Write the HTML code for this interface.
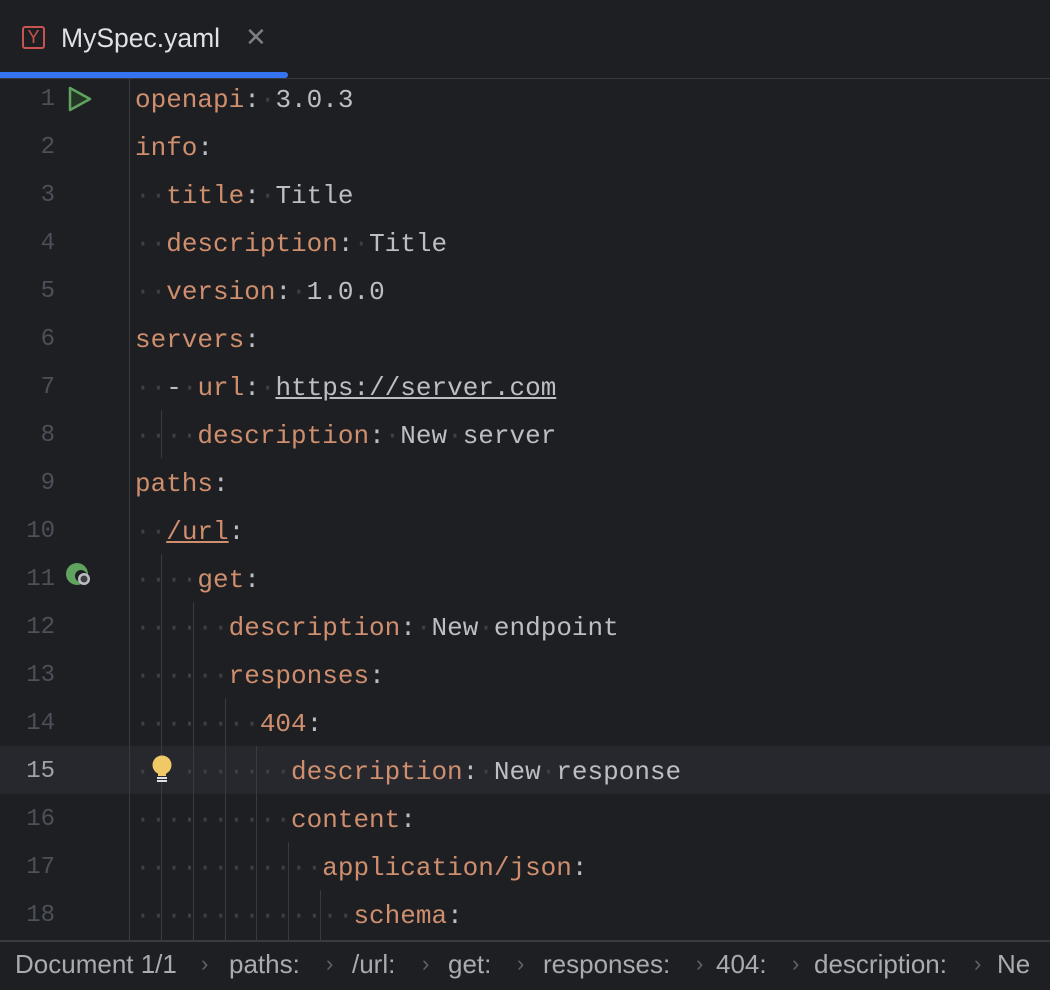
<!DOCTYPE html>
<html><head><meta charset="utf-8"><style>
html,body{margin:0;padding:0;background:#1e1f22;width:1050px;height:990px;overflow:hidden;position:relative;font-family:"Liberation Sans",sans-serif}
#w{position:absolute;left:0;top:0;width:1050px;height:990px;overflow:hidden}
.tab{position:absolute;left:0;top:0;width:1050px;height:79px;border-bottom:1px solid #393b40;box-sizing:border-box}
.tabu{position:absolute;left:0;top:72px;width:288px;height:6px;background:#3574f0;border-radius:0 3px 3px 0}
.ticon{position:absolute;left:22px;top:26px;width:23px;height:23px;border:2px solid #c75450;border-radius:3px;box-sizing:border-box;color:#c75450;font-size:18px;line-height:19px;text-align:center}
.tname{position:absolute;left:61px;top:23px;font-size:26.5px;color:#dfe1e5}
.tx{position:absolute;left:245px;top:22px;font-size:26px;color:#7a7e85}
.gut{position:absolute;left:129px;top:79px;width:1px;height:861px;background:#393b40}
.ln{position:absolute;left:0;width:55px;text-align:right;font-family:"Liberation Mono",monospace;font-size:24px;color:#4b5059;line-height:48px}
.row{position:absolute;left:135px;font-family:"Liberation Mono",monospace;font-size:26px;line-height:48px;color:#bcbec4;white-space:pre}
.k{color:#cf8e6d}.d{color:#3d4047}.u{text-decoration:underline}
.hl{position:absolute;left:0;top:746px;width:1050px;height:48px;background:#26282e}
.g{position:absolute;width:1px;background:#393b40}
.st{position:absolute;left:0;top:940px;width:1050px;height:50px;border-top:2px solid #393b40;box-sizing:border-box;background:#1e1f22}
.s{position:absolute;top:949px;font-size:26px;color:#a8abb0;white-space:nowrap}
.a{position:absolute;top:951px;font-size:22px;color:#5f636a}
</style></head><body><div id="w">
<div class="tab"></div><div class="tabu"></div>
<div class="ticon">Y</div><div class="tname">MySpec.yaml</div><div class="tx">✕</div>
<div class="hl"></div>
<div class="gut"></div>
<div class="g" style="left:161px;top:410px;height:48px"></div>
<div class="g" style="left:161px;top:554px;height:386px"></div>
<div class="g" style="left:193px;top:602px;height:338px"></div>
<div class="g" style="left:225px;top:698px;height:242px"></div>
<div class="g" style="left:256px;top:746px;height:194px"></div>
<div class="g" style="left:288px;top:842px;height:98px"></div>
<div class="g" style="left:320px;top:890px;height:50px"></div>

<div class="ln" style="top:76px">1</div>
<div class="ln" style="top:124px">2</div>
<div class="ln" style="top:172px">3</div>
<div class="ln" style="top:220px">4</div>
<div class="ln" style="top:268px">5</div>
<div class="ln" style="top:316px">6</div>
<div class="ln" style="top:364px">7</div>
<div class="ln" style="top:412px">8</div>
<div class="ln" style="top:460px">9</div>
<div class="ln" style="top:508px">10</div>
<div class="ln" style="top:556px">11</div>
<div class="ln" style="top:604px">12</div>
<div class="ln" style="top:652px">13</div>
<div class="ln" style="top:700px">14</div>
<div class="ln" style="top:748px;color:#a1a3ab">15</div>
<div class="ln" style="top:796px">16</div>
<div class="ln" style="top:844px">17</div>
<div class="ln" style="top:892px">18</div>

<svg style="position:absolute;left:66px;top:86px" width="28" height="28"><path d="M4 2 L24 13 L4 24 Z" fill="#253627" stroke="#5fa35f" stroke-width="2.5" stroke-linejoin="round"/></svg>
<svg style="position:absolute;left:66px;top:562px" width="28" height="28"><circle cx="11" cy="12" r="11" fill="#5fa35f"/><circle cx="15" cy="14" r="6" fill="#1e1f22"/><circle cx="18" cy="17" r="6" fill="#bcbec4"/><circle cx="18" cy="17" r="3.5" fill="#3c3f44"/></svg>
<svg style="position:absolute;left:150px;top:755px" width="24" height="32"><circle cx="12" cy="10" r="9.5" fill="#f0c966"/><rect x="8" y="18" width="8" height="3" fill="#f0c966"/><rect x="7" y="22" width="10" height="2" fill="#dfe1e5"/><rect x="7" y="25" width="10" height="2" fill="#dfe1e5"/></svg>

<div class="row" style="top:76px"><span class="k">openapi</span>:<span class="d">·</span>3.0.3</div>
<div class="row" style="top:124px"><span class="k">info</span>:</div>
<div class="row" style="top:172px"><span class="d">··</span><span class="k">title</span>:<span class="d">·</span>Title</div>
<div class="row" style="top:220px"><span class="d">··</span><span class="k">description</span>:<span class="d">·</span>Title</div>
<div class="row" style="top:268px"><span class="d">··</span><span class="k">version</span>:<span class="d">·</span>1.0.0</div>
<div class="row" style="top:316px"><span class="k">servers</span>:</div>
<div class="row" style="top:364px"><span class="d">··</span>-<span class="d">·</span><span class="k">url</span>:<span class="d">·</span><span class="u">https://server.com</span></div>
<div class="row" style="top:412px"><span class="d">····</span><span class="k">description</span>:<span class="d">·</span>New<span class="d">·</span>server</div>
<div class="row" style="top:460px"><span class="k">paths</span>:</div>
<div class="row" style="top:508px"><span class="d">··</span><span class="k u">/url</span>:</div>
<div class="row" style="top:556px"><span class="d">····</span><span class="k">get</span>:</div>
<div class="row" style="top:604px"><span class="d">······</span><span class="k">description</span>:<span class="d">·</span>New<span class="d">·</span>endpoint</div>
<div class="row" style="top:652px"><span class="d">······</span><span class="k">responses</span>:</div>
<div class="row" style="top:700px"><span class="d">········</span><span class="k">404</span>:</div>
<div class="row" style="top:748px"><span class="d">·  ·······</span><span class="k">description</span>:<span class="d">·</span>New<span class="d">·</span>response</div>
<div class="row" style="top:796px"><span class="d">··········</span><span class="k">content</span>:</div>
<div class="row" style="top:844px"><span class="d">············</span><span class="k">application/json</span>:</div>
<div class="row" style="top:892px"><span class="d">··············</span><span class="k">schema</span>:</div>

<div class="st"></div>
<div class="s" style="left:15px">Document 1/1</div>
<div class="a" style="left:201px">›</div>
<div class="s" style="left:229px">paths:</div>
<div class="a" style="left:326px">›</div>
<div class="s" style="left:352px">/url:</div>
<div class="a" style="left:422px">›</div>
<div class="s" style="left:448px">get:</div>
<div class="a" style="left:517px">›</div>
<div class="s" style="left:543px">responses:</div>
<div class="a" style="left:696px">›</div>
<div class="s" style="left:716px">404:</div>
<div class="a" style="left:792px">›</div>
<div class="s" style="left:814px">description:</div>
<div class="a" style="left:974px">›</div>
<div class="s" style="left:997px">Ne</div>
</div></body></html>
